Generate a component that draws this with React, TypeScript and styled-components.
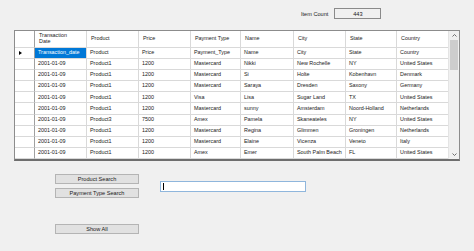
import React from 'react';
import styled, { createGlobalStyle } from 'styled-components';

const GlobalStyle = createGlobalStyle`
  html, body {
    margin: 0;
    padding: 0;
    background: #f0f0f0;
  }
`;

const Window = styled.div`
  box-sizing: border-box;
  width: 474px;
  height: 251px;
  background: #f0f0f0;
  font-family: 'Liberation Sans', 'DejaVu Sans', sans-serif;
  font-size: 5.4px;
  color: #1a1a1a;
  display: flex;
  flex-direction: column;
  padding: 8px 14px 0 14px;
`;

const TopBar = styled.div`
  display: flex;
  align-items: center;
  height: 11px;
  padding-left: 287px;
  gap: 6px;
`;

const Label = styled.span`
  font-size: 5.6px;
`;

const CountBox = styled.div`
  box-sizing: border-box;
  width: 47px;
  height: 11px;
  border: 1px solid #8a8a8a;
  display: flex;
  align-items: center;
  justify-content: center;
  font-size: 5.6px;
`;

const GridFrame = styled.div`
  box-sizing: border-box;
  margin-top: 11px;
  width: 446px;
  height: 131px;
  border: 1px solid #8c8c8c;
  border-bottom: 2px solid #6e6e6e;
  background: #fff;
  display: flex;
`;

const Table = styled.div`
  display: grid;
  grid-template-columns: 20px 52px 52px 52px 50px 53px 52px 51px 52px;
  grid-template-rows: 17px;
  grid-auto-rows: 11.1px;
  flex: 1;
  overflow: hidden;
`;

const Cell = styled.div<{ $head?: boolean; $selected?: boolean; $rowHead?: boolean }>`
  box-sizing: border-box;
  display: flex;
  align-items: center;
  padding-left: ${({ $head }) => ($head ? '4px' : '3px')};
  border-right: 1px solid #d9d9d9;
  border-bottom: 1px solid #d9d9d9;
  white-space: nowrap;
  overflow: hidden;
  line-height: 1.05;
  background: ${({ $selected }) => ($selected ? '#0078d7' : '#fff')};
  color: ${({ $selected }) => ($selected ? '#fff' : '#1a1a1a')};
  ${({ $rowHead }) => ($rowHead ? 'border-right-color: #a0a0a0; padding-left: 4px;' : '')}
`;

const Arrow = styled.span`
  width: 0;
  height: 0;
  border-top: 2px solid transparent;
  border-bottom: 2px solid transparent;
  border-left: 3px solid #000;
`;

const ScrollBar = styled.div`
  width: 10px;
  background: #f0f0f0;
  border-left: 1px solid #e4e4e4;
  display: flex;
  flex-direction: column;
  align-items: center;
`;

const ScrollArrow = styled.div`
  height: 9px;
  display: flex;
  align-items: center;
  justify-content: center;
  color: #606060;
`;

const Track = styled.div`
  flex: 1;
  width: 100%;
  display: flex;
  flex-direction: column;
  align-items: center;
`;

const Thumb = styled.div`
  width: 8px;
  height: 30px;
  background: #cdcdcd;
`;

const Lower = styled.div`
  display: flex;
  padding-left: 41px;
  margin-top: 13px;
  gap: 21px;
`;

const ButtonColumn = styled.div`
  display: flex;
  flex-direction: column;
  width: 84px;
`;

const Button = styled.div<{ $gapTop?: number }>`
  box-sizing: border-box;
  height: 10px;
  margin-top: ${({ $gapTop }) => $gapTop ?? 0}px;
  background: #e1e1e1;
  border: 1px solid #b4b4b4;
  display: flex;
  align-items: center;
  justify-content: center;
  font-size: 5.6px;
`;

const TextBox = styled.div`
  box-sizing: border-box;
  margin-top: 7px;
  width: 146px;
  height: 11px;
  background: #fff;
  border: 1px solid #8fb6dc;
  display: flex;
  align-items: center;
  padding-left: 2px;
`;

const Caret = styled.span`
  width: 1px;
  height: 7px;
  background: #000;
`;

const headers = ['Transaction\nDate', 'Product', 'Price', 'Payment Type', 'Name', 'City', 'State', 'Country'];

const rows: string[][] = [
  ['Transaction_date', 'Product', 'Price', 'Payment_Type', 'Name', 'City', 'State', 'Country'],
  ['2001-01-09', 'Product1', '1200', 'Mastercard', 'Nikki', 'New Rochelle', 'NY', 'United States'],
  ['2001-01-09', 'Product1', '1200', 'Mastercard', 'Si', 'Holte', 'Kobenhavn', 'Denmark'],
  ['2001-01-09', 'Product1', '1200', 'Mastercard', 'Saraya', 'Dresden', 'Saxony', 'Germany'],
  ['2001-01-09', 'Product1', '1200', 'Visa', 'Lisa', 'Sugar Land', 'TX', 'United States'],
  ['2001-01-09', 'Product1', '1200', 'Mastercard', 'sunny', 'Amsterdam', 'Noord-Holland', 'Netherlands'],
  ['2001-01-09', 'Product3', '7500', 'Amex', 'Pamela', 'Skaneateles', 'NY', 'United States'],
  ['2001-01-09', 'Product1', '1200', 'Mastercard', 'Regina', 'Glimmen', 'Groningen', 'Netherlands'],
  ['2001-01-09', 'Product1', '1200', 'Mastercard', 'Elaine', 'Vicenza', 'Veneto', 'Italy'],
  ['2001-01-09', 'Product1', '1200', 'Amex', 'Emer', 'South Palm Beach', 'FL', 'United States'],
];

const App = () => (
  <Window>
    <GlobalStyle />
    <TopBar>
      <Label>Item Count</Label>
      <CountBox>443</CountBox>
    </TopBar>

    <GridFrame>
      <Table>
        <Cell $head $rowHead />
        {headers.map((h) => (
          <Cell $head key={h} style={{ whiteSpace: 'pre' }}>
            {h}
          </Cell>
        ))}
        {rows.map((row, i) => (
          <React.Fragment key={i}>
            <Cell $rowHead>{i === 0 && <Arrow />}</Cell>
            {row.map((value, j) => (
              <Cell key={j} $selected={i === 0 && j === 0}>
                {value}
              </Cell>
            ))}
          </React.Fragment>
        ))}
      </Table>
      <ScrollBar>
        <ScrollArrow>
          <svg width="5" height="3" viewBox="0 0 5 3">
            <path d="M0.5 2.5 L2.5 0.5 L4.5 2.5" stroke="#606060" fill="none" strokeWidth="0.9" />
          </svg>
        </ScrollArrow>
        <Track>
          <Thumb />
        </Track>
        <ScrollArrow>
          <svg width="5" height="3" viewBox="0 0 5 3">
            <path d="M0.5 0.5 L2.5 2.5 L4.5 0.5" stroke="#606060" fill="none" strokeWidth="0.9" />
          </svg>
        </ScrollArrow>
      </ScrollBar>
    </GridFrame>

    <Lower>
      <ButtonColumn>
        <Button>Product Search</Button>
        <Button $gapTop={4}>Payment Type Search</Button>
        <Button $gapTop={26}>Show All</Button>
      </ButtonColumn>
      <TextBox>
        <Caret />
      </TextBox>
    </Lower>
  </Window>
);

export default App;
